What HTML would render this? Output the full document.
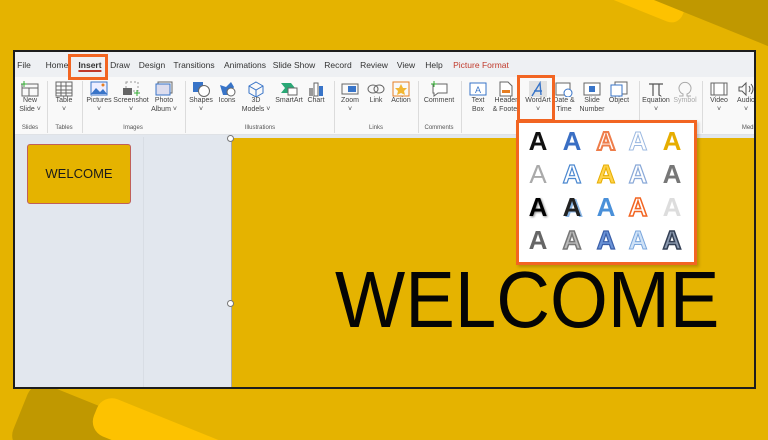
<!DOCTYPE html>
<html><head><meta charset="utf-8"><style>
*{margin:0;padding:0;box-sizing:border-box}
html{width:768px;height:440px;overflow:hidden}
body{width:768px;height:440px;overflow:hidden;background:#e5b300;position:relative;font-family:"Liberation Sans",sans-serif}
.abs{position:absolute}
.clip{position:absolute;left:0;top:0;width:768px;height:440px;overflow:hidden}
.deco1{left:640px;top:-40px;width:190px;height:70px;background:#c09800;transform:rotate(22deg);border-radius:12px}
.deco2{left:570px;top:-35px;width:120px;height:40px;background:#fdc200;transform:rotate(22deg);border-radius:12px}
.deco3{left:15px;top:405px;width:150px;height:70px;background:#c09800;transform:rotate(22deg);border-radius:16px}
.deco4{left:90px;top:420px;width:150px;height:40px;background:#fdc200;transform:rotate(22deg);border-radius:16px}
.frame{left:13px;top:50px;width:743px;height:339px;border:2px solid #1d1d1d;background:#e2e7ee;overflow:hidden}
.tabs{left:0;top:0;width:741px;height:25px;background:#eef0f3}
.tab{position:absolute;top:8px;font-size:8.5px;color:#333;transform:translateX(-50%);white-space:nowrap}
.rib{left:0;top:25px;width:741px;height:58px;background:#f9f9f9;border-bottom:1px solid #dfe2e6}
.it{position:absolute;top:44px;font-size:7px;color:#444;text-align:center;transform:translateX(-50%);line-height:9px;white-space:nowrap}
.ic{position:absolute;top:29px;transform:translateX(-50%)}
.gl{position:absolute;top:73px;font-size:6px;color:#555;transform:translateX(-50%)}
.sep{position:absolute;top:29px;width:1px;height:52px;background:#dcdcdc}
.A{position:absolute;font-size:26px;font-weight:bold;transform:translate(-50%,-50%);line-height:1}
</style></head><body>
<div class="clip">
<div class="abs deco2"></div><div class="abs deco1"></div>
<div class="abs deco3"></div><div class="abs deco4"></div>
</div>
<div class="abs frame">
 <div class="abs tabs">
  <span class="tab" style="left:9px">File</span>
  <span class="tab" style="left:42px">Home</span>
  <span class="tab" style="left:75px;font-weight:bold;border-bottom:2px solid #c0392b">Insert</span>
  <span class="tab" style="left:105px">Draw</span>
  <span class="tab" style="left:137px">Design</span>
  <span class="tab" style="left:179px">Transitions</span>
  <span class="tab" style="left:230px">Animations</span>
  <span class="tab" style="left:279px">Slide Show</span>
  <span class="tab" style="left:323px">Record</span>
  <span class="tab" style="left:359px">Review</span>
  <span class="tab" style="left:391px">View</span>
  <span class="tab" style="left:419px">Help</span>
  <span class="tab" style="left:466px;color:#c0392b">Picture Format</span>
 </div>
 <div class="abs rib"></div>
 <svg class="ic" style="left:15px" width="18" height="16"><rect x="1" y="3" width="16" height="12" fill="none" stroke="#666"/><path d="M1 7h16M8 7v8" stroke="#666"/><path d="M3 0v6M0 3h6" stroke="#3a3"/></svg>
 <svg class="ic" style="left:49px" width="18" height="16"><rect x="1" y="1" width="16" height="14" fill="none" stroke="#666"/><path d="M1 5h16M1 9h16M1 12h16M6 1v14M11 1v14" stroke="#666"/></svg>
 <svg class="ic" style="left:84px" width="18" height="16"><rect x="1" y="1" width="16" height="13" fill="#eef" stroke="#3874c8"/><path d="M1 13l5-6 4 4 3-3 4 5z" fill="#3874c8"/><circle cx="13" cy="4" r="1.5" fill="#e67e22"/></svg>
 <svg class="ic" style="left:116px" width="18" height="16"><rect x="4" y="1" width="12" height="9" fill="none" stroke="#999" stroke-dasharray="2"/><rect x="1" y="7" width="9" height="7" fill="#666"/><path d="M12 12h6M15 9v6" stroke="#3a3"/></svg>
 <svg class="ic" style="left:149px" width="18" height="16"><rect x="3" y="1" width="14" height="11" fill="none" stroke="#666"/><rect x="1" y="3" width="14" height="11" fill="#dde" stroke="#3874c8"/></svg>
 <svg class="ic" style="left:186px" width="18" height="16"><rect x="1" y="1" width="10" height="10" fill="#3874c8"/><circle cx="12" cy="10" r="5.5" fill="#fff" stroke="#666"/></svg>
 <svg class="ic" style="left:212px" width="18" height="16"><path d="M2 4l6 2 5-5 3 5-4 8H5z" fill="#3874c8"/><circle cx="13" cy="11" r="4" fill="#fff" stroke="#666"/></svg>
 <svg class="ic" style="left:241px" width="18" height="16"><path d="M9 1l7 4v7l-7 4-7-4V5z M2 5l7 4 7-4 M9 9v7" fill="none" stroke="#3874c8"/></svg>
 <svg class="ic" style="left:274px" width="18" height="16"><path d="M1 2h10l4 5-4 5H1l4-5z" fill="#2aa876"/><rect x="8" y="7" width="9" height="7" fill="#fff" stroke="#666"/></svg>
 <svg class="ic" style="left:301px" width="18" height="16"><rect x="2" y="7" width="4" height="8" fill="#999"/><rect x="7" y="2" width="4" height="13" fill="#fff" stroke="#666"/><rect x="12" y="5" width="4" height="10" fill="#3874c8"/></svg>
 <svg class="ic" style="left:335px" width="18" height="16"><rect x="1" y="3" width="16" height="10" fill="none" stroke="#666"/><rect x="7" y="5" width="8" height="6" fill="#3874c8"/></svg>
 <svg class="ic" style="left:361px" width="18" height="16"><ellipse cx="6" cy="8" rx="5" ry="4" fill="none" stroke="#666"/><ellipse cx="12" cy="8" rx="5" ry="4" fill="none" stroke="#666"/></svg>
 <svg class="ic" style="left:386px" width="18" height="16"><rect x="1" y="1" width="16" height="14" fill="none" stroke="#e67e22"/><path d="M9 3l2 4h4l-3 3 1 4-4-2-4 2 1-4-3-3h4z" fill="#f2b632"/></svg>
 <svg class="ic" style="left:424px" width="18" height="16"><path d="M3 3h14v9H8l-4 3v-3H3z" fill="#fff" stroke="#666"/><path d="M4 0v6M1 3h6" stroke="#3a3"/></svg>
 <svg class="ic" style="left:463px" width="18" height="16"><rect x="1" y="2" width="16" height="12" fill="#fff" stroke="#3874c8"/><text x="6" y="12" font-size="9" fill="#3874c8" font-family="Liberation Sans">A</text></svg>
 <svg class="ic" style="left:491px" width="18" height="16"><path d="M3 1h8l4 4v10H3z" fill="#fff" stroke="#666"/><rect x="5" y="9" width="8" height="3" fill="#e67e22"/></svg>
 <svg class="ic" style="left:523px;background:#e2e2e2" width="18" height="16"><path d="M3 15L11 2l1 12M5 10h8" fill="none" stroke="#3874c8" stroke-width="1.4"/></svg>
 <svg class="ic" style="left:549px" width="18" height="16"><rect x="1" y="2" width="14" height="12" fill="#fff" stroke="#666"/><circle cx="13" cy="12" r="4" fill="#fff" stroke="#3874c8"/></svg>
 <svg class="ic" style="left:577px" width="18" height="16"><rect x="1" y="2" width="16" height="12" fill="#fff" stroke="#666"/><rect x="6" y="5" width="6" height="6" fill="#3874c8"/></svg>
 <svg class="ic" style="left:604px" width="18" height="16"><rect x="5" y="1" width="12" height="12" fill="#fff" stroke="#666"/><rect x="1" y="4" width="11" height="11" fill="#fff" stroke="#3874c8"/></svg>
 <svg class="ic" style="left:641px" width="18" height="16"><path d="M2 3h14M6 3v12M12 3v11l2 1" fill="none" stroke="#555" stroke-width="1.2"/></svg>
 <svg class="ic" style="left:670px" width="18" height="16"><path d="M3 15h4v-2a6 6 0 1 1 4 0v2h4" fill="none" stroke="#aaa"/></svg>
 <svg class="ic" style="left:704px" width="18" height="16"><rect x="1" y="2" width="16" height="12" fill="#fff" stroke="#666"/><path d="M4 2v12M14 2v12" stroke="#666"/></svg>
 <svg class="ic" style="left:731px" width="18" height="16"><path d="M2 6h3l4-4v12l-4-4H2z M12 5q2 3 0 6M14 3q4 5 0 10" fill="none" stroke="#555"/></svg>
 <div class="it" style="left:15px">New<br>Slide ˅</div>
 <div class="it" style="left:49px">Table<br>˅</div>
 <div class="it" style="left:84px">Pictures<br>˅</div>
 <div class="it" style="left:116px">Screenshot<br>˅</div>
 <div class="it" style="left:149px">Photo<br>Album ˅</div>
 <div class="it" style="left:186px">Shapes<br>˅</div>
 <div class="it" style="left:212px">Icons</div>
 <div class="it" style="left:241px">3D<br>Models ˅</div>
 <div class="it" style="left:274px">SmartArt</div>
 <div class="it" style="left:301px">Chart</div>
 <div class="it" style="left:335px">Zoom<br>˅</div>
 <div class="it" style="left:361px">Link</div>
 <div class="it" style="left:386px">Action</div>
 <div class="it" style="left:424px">Comment</div>
 <div class="it" style="left:463px">Text<br>Box</div>
 <div class="it" style="left:491px">Header<br>&amp; Footer</div>
 <div class="it" style="left:523px">WordArt<br>˅</div>
 <div class="it" style="left:549px">Date &amp;<br>Time</div>
 <div class="it" style="left:577px">Slide<br>Number</div>
 <div class="it" style="left:604px">Object</div>
 <div class="it" style="left:641px">Equation<br>˅</div>
 <div class="it" style="left:670px;color:#aaa">Symbol</div>
 <div class="it" style="left:704px">Video<br>˅</div>
 <div class="it" style="left:731px">Audio<br>˅</div>
 <div class="gl" style="left:15px">Slides</div>
 <div class="gl" style="left:49px">Tables</div>
 <div class="gl" style="left:118px">Images</div>
 <div class="gl" style="left:245px">Illustrations</div>
 <div class="gl" style="left:361px">Links</div>
 <div class="gl" style="left:424px">Comments</div>
 <div class="gl" style="left:735px">Media</div>
 <div class="sep" style="left:32px"></div><div class="sep" style="left:67px"></div><div class="sep" style="left:170px"></div><div class="sep" style="left:319px"></div><div class="sep" style="left:403px"></div><div class="sep" style="left:446px"></div><div class="sep" style="left:624px"></div><div class="sep" style="left:687px"></div>
 <div class="abs" style="left:128px;top:85px;width:1px;height:260px;background:#d8dde4"></div>
 <div class="abs" style="left:12px;top:92px;width:104px;height:60px;background:#e5b300;border:1.5px solid #c0605a;border-radius:3px;font-size:13px;color:#1a1a1a;text-align:center;line-height:57px">WELCOME</div>
 <div class="abs" style="left:216px;top:86px;width:530px;height:260px;background:#e5b300;border-left:1px solid #aaa"></div>
 <div class="abs" style="left:212px;top:83px;width:7px;height:7px;border-radius:50%;background:#fff;border:1px solid #777"></div>
 <div class="abs" style="left:212px;top:248px;width:7px;height:7px;border-radius:50%;background:#fff;border:1px solid #777"></div>
 <div class="abs" style="left:320px;top:208px;font-size:80px;color:#050505;transform:scaleX(0.93);transform-origin:left top;line-height:1;white-space:nowrap">WELCOME</div>
</div>
<div class="abs" style="left:68px;top:54px;width:40px;height:26px;border:3px solid #f26522"></div>
<div class="abs" style="left:517px;top:75px;width:38px;height:47px;border:3px solid #f26522"></div>
<div class="abs" style="left:516px;top:120px;width:181px;height:145px;background:#fff;border:3px solid #f26522;box-shadow:2px 2px 3px rgba(0,0,0,.2)"></div>
<div class="A" style="left:538px;top:141px;color:#111">A</div>
<div class="A" style="left:572px;top:141px;color:#3a6fc4">A</div>
<div class="A" style="left:606px;top:141px;color:#fff;-webkit-text-stroke:2px #ee7d4a">A</div>
<div class="A" style="left:638px;top:141px;color:#fff;-webkit-text-stroke:1px #9bb8e0">A</div>
<div class="A" style="left:672px;top:141px;color:#e6ad00">A</div>
<div class="A" style="left:538px;top:174px;color:#aaa;font-weight:normal">A</div>
<div class="A" style="left:572px;top:174px;color:#fff;-webkit-text-stroke:1.2px #4c88d0">A</div>
<div class="A" style="left:606px;top:174px;color:#ffd24a;-webkit-text-stroke:1px #e6ad00">A</div>
<div class="A" style="left:638px;top:174px;color:#fff;-webkit-text-stroke:1.2px #8aa9d8">A</div>
<div class="A" style="left:672px;top:174px;color:#777">A</div>
<div class="A" style="left:538px;top:207px;color:#000;text-shadow:1px 1px 2px #888">A</div>
<div class="A" style="left:572px;top:207px;color:#222;text-shadow:2px 1px 0 #8bb6e5">A</div>
<div class="A" style="left:606px;top:207px;color:#4a90d9">A</div>
<div class="A" style="left:638px;top:207px;color:#fff;-webkit-text-stroke:1.5px #f26522">A</div>
<div class="A" style="left:672px;top:207px;color:#ddd">A</div>
<div class="A" style="left:538px;top:240px;color:#666">A</div>
<div class="A" style="left:572px;top:240px;color:#bbb;-webkit-text-stroke:1.5px #777">A</div>
<div class="A" style="left:606px;top:240px;color:#6b93d6;-webkit-text-stroke:1.2px #3a5ea8">A</div>
<div class="A" style="left:638px;top:240px;color:#cfe2f7;-webkit-text-stroke:1px #7aa6dc">A</div>
<div class="A" style="left:672px;top:240px;color:#8c9ab0;-webkit-text-stroke:1.5px #344055">A</div>
</body></html>
